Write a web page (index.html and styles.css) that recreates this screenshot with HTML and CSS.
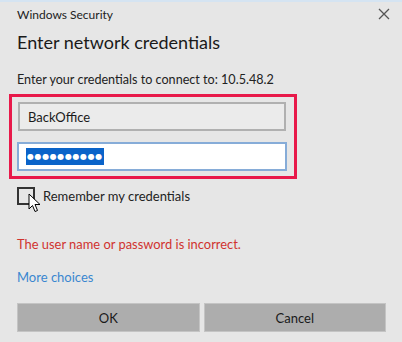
FILE: index.html
```html
<!DOCTYPE html>
<html>
<head>
<meta charset="utf-8">
<link rel="stylesheet" href="styles.css">
</head>
<body>
<div class="dialog">
  <div class="titlebar">
    <span class="title">Windows Security</span>
    <svg class="close" width="12" height="12" viewBox="0 0 12 12"><path d="M1 1 L11 11 M11 1 L1 11" stroke="#555" stroke-width="1.3" fill="none"/></svg>
  </div>
  <h1 class="heading">Enter network credentials</h1>
  <p class="desc">Enter your credentials to connect to: 10.5.48.2</p>
  <div class="highlight">
    <div class="field user">BackOffice</div>
    <div class="field pass"><span class="sel">●●●●●●●●●●</span></div>
  </div>
  <div class="remember">
    <span class="box"></span>
    <span class="label">Remember my credentials</span>
    <svg class="cursor" width="14" height="20" viewBox="0 0 14 20"><path d="M1 1 L1 16 L4.5 12.5 L7 18.5 L9.5 17.5 L7 11.5 L12 11.5 Z" fill="#fff" stroke="#000" stroke-width="1" stroke-linejoin="round"/></svg>
  </div>
  <p class="error">The user name or password is incorrect.</p>
  <a class="more">More choices</a>
  <div class="buttons">
    <button class="btn">OK</button>
    <button class="btn">Cancel</button>
  </div>
</div>
</body>
</html>
```
FILE: styles.css
```css
html, body {
  margin: 0;
  padding: 0;
  background: #e6e6e6;
}
body {
  width: 402px;
  height: 342px;
  overflow: hidden;
  font-family: "Lato", "Noto Sans", sans-serif;
  color: #1a1a1a;
}
.dialog {
  border-top: 2px solid #d5e4f2;
  padding-left: 17px;
  padding-right: 16px;
  height: 340px;
  box-sizing: border-box;
}
.titlebar {
  display: flex;
  justify-content: space-between;
  align-items: center;
  height: 24px;
}
.title {
  font-size: 12px;
  color: #222;
}
.close {
  margin-right: -4px;
}
.heading {
  margin: 3px 0 0 0;
  font-size: 18px;
  font-weight: normal;
  line-height: 26px;
  color: #1a1a1a;
}
.desc {
  margin: 16px 0 0 0;
  font-size: 12.6px;
  line-height: 18px;
  color: #222;
}
.highlight {
  margin: 5px 0 0 -8px;
  width: 288px;
  box-sizing: border-box;
  border: 3px solid #e8194a;
  padding: 5px 7px 5px 5px;
  display: flex;
  flex-direction: column;
  gap: 11px;
}
.field {
  height: 29px;
  box-sizing: border-box;
  font-size: 13px;
  display: flex;
  align-items: center;
  padding-left: 8px;
}
.user {
  background: #ebebeb;
  border: 2px solid #b0b0b0;
  margin-left: 1px;
  margin-right: 1px;
}
.pass {
  background: #fff;
  border: 2px solid #86acd8;
}
.sel {
  background: #0a63c9;
  color: #fff;
  font-family: "DejaVu Sans", sans-serif;
  font-size: 8px;
  letter-spacing: 0.6px;
  line-height: 17px;
  padding: 0 1px;
  margin-left: -1px;
}
.remember {
  position: relative;
  display: flex;
  align-items: center;
  margin-top: 8px;
  height: 18px;
}
.box {
  width: 18px;
  height: 18px;
  box-sizing: border-box;
  border: 2px solid #333;
  background: #e6e6e6;
}
.label {
  margin-left: 8px;
  font-size: 13px;
  color: #222;
}
.cursor {
  position: absolute;
  left: 11px;
  top: 6px;
}
.error {
  margin: 30px 0 0 0;
  font-size: 12.9px;
  line-height: 18px;
  color: #d0332f;
}
.more {
  display: block;
  margin-top: 15px;
  font-size: 13px;
  line-height: 18px;
  color: #3a86d0;
}
.buttons {
  display: flex;
  gap: 4px;
  margin-top: 17px;
}
.btn {
  flex: 1;
  height: 29px;
  background: #adadad;
  border: 1px solid #c4c4c4;
  font-family: inherit;
  font-size: 13px;
  color: #1a1a1a;
  padding: 0;
}
```
